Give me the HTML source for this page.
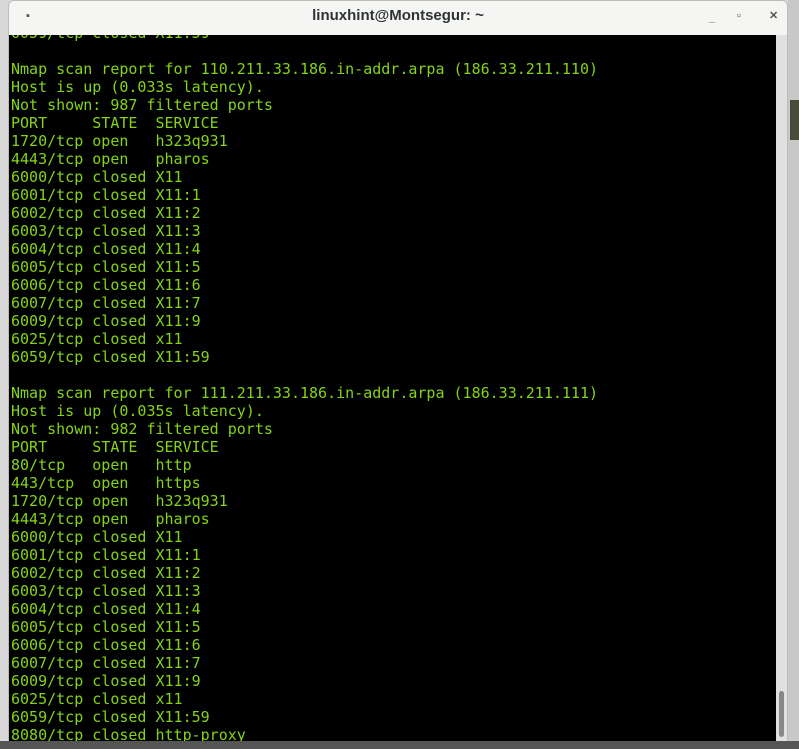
<!DOCTYPE html>
<html><head><style>
body{margin:0;width:799px;height:749px;overflow:hidden;background:#d8d8d8;position:relative;font-family:"Liberation Sans",sans-serif}
#win{position:absolute;left:8px;top:0;width:780px;height:745px;background:#f4f4f2;border-radius:6px 6px 0 0;border:1px solid #bbb;box-sizing:border-box;overflow:hidden}
#title{position:absolute;left:0;top:0;width:100%;height:34px;background:#f5f5f3;text-align:center;line-height:30px;font-size:15px;font-weight:bold;color:#2e3436}
#term{position:absolute;left:0;top:34px;width:767px;height:711px;background:#000;overflow:hidden}
#sb{position:absolute;left:767px;top:34px;width:12px;height:711px;background:#e0e0de}
#thumb{position:absolute;left:3px;top:656px;width:5px;height:46px;background:#888;border-radius:3px}
pre{margin:0;position:absolute;left:2px;top:-11px;font-family:"DejaVu Sans Mono",monospace;font-size:15px;line-height:18px;color:#84d416}
#task{position:absolute;left:0;top:741px;width:799px;height:8px;background:#555}
.b{position:absolute;color:#555;font-size:11px}
</style></head><body>
<div style="position:absolute;left:788px;top:0;width:11px;height:749px;background:#c8c8c8"></div>
<div style="position:absolute;left:790px;top:100px;width:9px;height:40px;background:#4a4a3a"></div>
<div id="win">
<div id="title">linuxhint@Montsegur: ~
<span class="b" style="left:17px;top:0">▪</span>
<span class="b" style="left:700px;top:2px">_</span>
<span class="b" style="left:728px;top:0">▫</span>
<span class="b" style="left:760px;top:0">✕</span>
</div>
<div id="term"><pre>6059/tcp closed X11:59

Nmap scan report for 110.211.33.186.in-addr.arpa (186.33.211.110)
Host is up (0.033s latency).
Not shown: 987 filtered ports
PORT     STATE  SERVICE
1720/tcp open   h323q931
4443/tcp open   pharos
6000/tcp closed X11
6001/tcp closed X11:1
6002/tcp closed X11:2
6003/tcp closed X11:3
6004/tcp closed X11:4
6005/tcp closed X11:5
6006/tcp closed X11:6
6007/tcp closed X11:7
6009/tcp closed X11:9
6025/tcp closed x11
6059/tcp closed X11:59

Nmap scan report for 111.211.33.186.in-addr.arpa (186.33.211.111)
Host is up (0.035s latency).
Not shown: 982 filtered ports
PORT     STATE  SERVICE
80/tcp   open   http
443/tcp  open   https
1720/tcp open   h323q931
4443/tcp open   pharos
6000/tcp closed X11
6001/tcp closed X11:1
6002/tcp closed X11:2
6003/tcp closed X11:3
6004/tcp closed X11:4
6005/tcp closed X11:5
6006/tcp closed X11:6
6007/tcp closed X11:7
6009/tcp closed X11:9
6025/tcp closed x11
6059/tcp closed X11:59
8080/tcp closed http-proxy</pre></div>
<div id="sb"><div id="thumb"></div></div>
</div>
<div id="task"></div>
</body></html>
